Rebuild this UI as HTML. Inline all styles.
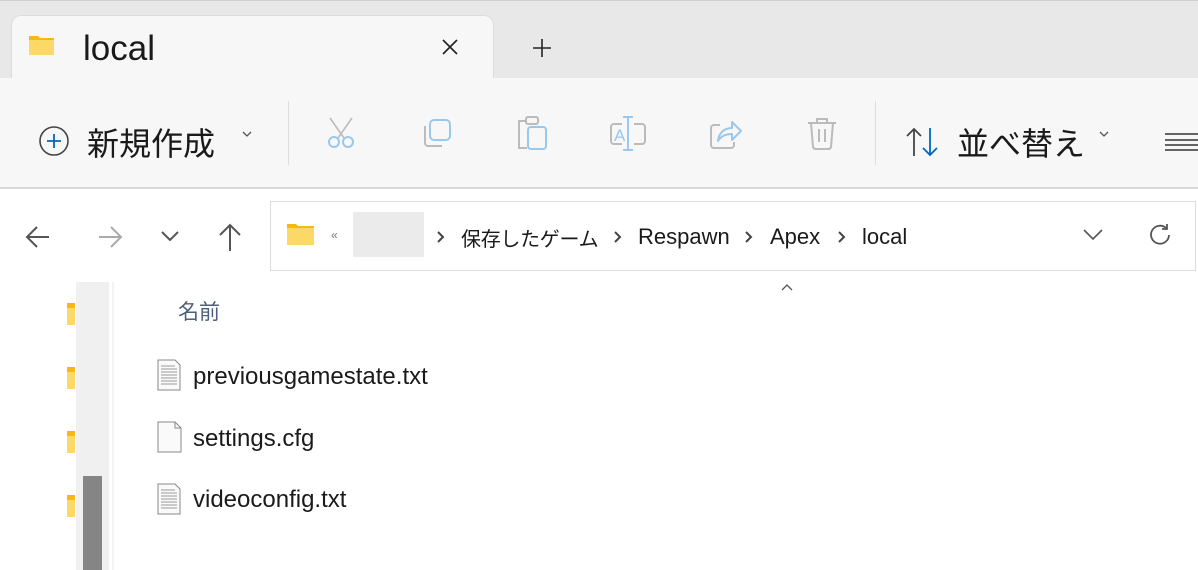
<!DOCTYPE html>
<html><head><meta charset="utf-8"><style>
*{margin:0;padding:0;box-sizing:border-box}
body{width:1198px;height:570px;overflow:hidden;background:#fff;position:relative;font-family:"Liberation Sans","Noto Sans CJK JP",sans-serif;color:#1a1a1a}
.a{position:absolute}
.jp{font-family:"Noto Sans CJK JP","Liberation Sans",sans-serif}
.bc{position:absolute;top:224px;font-size:22px;white-space:nowrap}
</style></head><body>
<div class="a" style="left:0;top:0;width:1198px;height:78px;background:#e8e8e8;border-top:1px solid #cfcfcf"></div>
<div class="a" style="left:11px;top:15px;width:483px;height:64px;background:#f7f7f7;border:1px solid #dcdcdc;border-bottom:none;border-radius:10px 10px 0 0"></div>
<div class="a" style="left:0;top:78px;width:1198px;height:111px;background:#f7f7f7;border-bottom:2px solid #d9d9d9"></div>
<svg class="a" style="left:28px;top:34px" width="28" height="24"><path d="M1 2h9l2 2h14v17H1z" fill="#f5b915"/><path d="M1 6h25v15H1z" fill="#fcd867"/></svg>
<div class="a" style="left:83px;top:29px;font-size:35px">local</div>
<svg class="a" style="left:440px;top:37px" width="20" height="20"><path d="M3 3l14 14M17 3L3 17" stroke="#222" stroke-width="1.6"/></svg>
<svg class="a" style="left:531px;top:37px" width="22" height="22"><path d="M11 2v18M2 11h18" stroke="#222" stroke-width="1.6"/></svg>
<svg class="a" style="left:37px;top:124px" width="34" height="34"><circle cx="17" cy="17" r="14" fill="none" stroke="#444" stroke-width="1.6"/><path d="M17 10v14M10 17h14" stroke="#0067c0" stroke-width="1.8"/></svg>
<div class="a jp" style="left:87px;top:119px;font-size:32px">新規作成</div>
<svg class="a" style="left:241px;top:130px" width="12" height="8"><path d="M2 2l4 4 4-4" fill="none" stroke="#555" stroke-width="1.3"/></svg>
<div class="a" style="left:288px;top:101px;width:1px;height:64px;background:#ddd"></div>
<svg class="a" style="left:325px;top:116px" width="32" height="34"><path d="M5 2l14 20M27 2L13 22" stroke="#bbb" stroke-width="1.6"/><circle cx="9" cy="26" r="5" fill="none" stroke="#99c8ee" stroke-width="2"/><circle cx="23" cy="26" r="5" fill="none" stroke="#99c8ee" stroke-width="2"/></svg>
<svg class="a" style="left:420px;top:117px" width="34" height="34"><rect x="10" y="3" width="20" height="20" rx="4" fill="none" stroke="#99c8ee" stroke-width="2"/><path d="M5 9v17a3 3 0 0 0 3 3h14" fill="none" stroke="#bbb" stroke-width="2"/></svg>
<svg class="a" style="left:515px;top:116px" width="34" height="36"><path d="M10 5H4v27h8" fill="none" stroke="#bbb" stroke-width="2"/><rect x="11" y="1" width="12" height="7" rx="2" fill="none" stroke="#bbb" stroke-width="2"/><rect x="13" y="11" width="18" height="22" rx="3" fill="none" stroke="#99c8ee" stroke-width="2"/></svg>
<svg class="a" style="left:610px;top:116px" width="36" height="36"><path d="M12 8H4a3 3 0 0 0-3 3v14a3 3 0 0 0 3 3h8M24 8h8a3 3 0 0 1 3 3v14a3 3 0 0 1-3 3h-8" fill="none" stroke="#bbb" stroke-width="2"/><path d="M13 1h10M13 34h10M18 1v33" stroke="#99c8ee" stroke-width="2"/><text x="4" y="25" font-size="17" fill="#99c8ee" font-family="Liberation Sans">A</text></svg>
<svg class="a" style="left:708px;top:117px" width="36" height="34"><path d="M12 8H6a3 3 0 0 0-3 3v17a3 3 0 0 0 3 3h17a3 3 0 0 0 3-3v-3" fill="none" stroke="#bbb" stroke-width="2"/><path d="M10 24c1-9 7-13 14-13V5l9 9-9 9v-6c-6 0-11 2-14 7z" fill="none" stroke="#99c8ee" stroke-width="2" stroke-linejoin="round"/></svg>
<svg class="a" style="left:805px;top:116px" width="34" height="36"><path d="M3 7h28M12 7V3h10v4M6 7l2 24a3 3 0 0 0 3 2h12a3 3 0 0 0 3-2l2-24M14 13v13M20 13v13" fill="none" stroke="#bbb" stroke-width="2"/></svg>
<div class="a" style="left:875px;top:101px;width:1px;height:64px;background:#ddd"></div>
<svg class="a" style="left:905px;top:126px" width="36" height="32"><path d="M9 30V3M2 10l7-7 7 7" fill="none" stroke="#444" stroke-width="1.8"/><path d="M25 2v27M18 22l7 7 7-7" fill="none" stroke="#0067c0" stroke-width="1.8"/></svg>
<div class="a jp" style="left:957px;top:119px;font-size:32px">並べ替え</div>
<svg class="a" style="left:1098px;top:130px" width="12" height="8"><path d="M2 2l4 4 4-4" fill="none" stroke="#555" stroke-width="1.3"/></svg>
<svg class="a" style="left:1165px;top:132px" width="33" height="20"><path d="M0 2h33M0 8h33M0 13h33M0 18h33" stroke="#333" stroke-width="1.6"/></svg>
<svg class="a" style="left:24px;top:224px" width="28" height="26"><path d="M3 13h22M13 3L3 13l10 10" fill="none" stroke="#555" stroke-width="2"/></svg>
<svg class="a" style="left:96px;top:224px" width="28" height="26"><path d="M3 13h22M15 3l10 10-10 10" fill="none" stroke="#aaa" stroke-width="2"/></svg>
<svg class="a" style="left:160px;top:229px" width="20" height="14"><path d="M2 3l8 8 8-8" fill="none" stroke="#555" stroke-width="2"/></svg>
<svg class="a" style="left:217px;top:222px" width="26" height="30"><path d="M13 29V3M3 13L13 3l10 10" fill="none" stroke="#555" stroke-width="2"/></svg>
<div class="a" style="left:270px;top:201px;width:926px;height:70px;border:1px solid #dcdcdc;background:#fff"></div>
<svg class="a" style="left:286px;top:223px" width="30" height="24"><path d="M1 1h9l2 2h16v19H1z" fill="#f5b915"/><path d="M1 5h27v17H1z" fill="#fcd867"/></svg>
<div class="a" style="left:331px;top:228px;font-size:12px;color:#777">«</div>
<div class="a" style="left:353px;top:212px;width:71px;height:45px;background:#ebebeb"></div>
<svg class="a" style="left:436px;top:230px" width="10" height="14"><path d="M2 2l5 5-5 5" fill="none" stroke="#444" stroke-width="2"/></svg>
<div class="bc jp" style="left:461px;top:223px;font-size:20px;letter-spacing:-0.3px">保存したゲーム</div>
<svg class="a" style="left:613px;top:230px" width="10" height="14"><path d="M2 2l5 5-5 5" fill="none" stroke="#444" stroke-width="2"/></svg>
<div class="bc" style="left:638px">Respawn</div>
<svg class="a" style="left:744px;top:230px" width="10" height="14"><path d="M2 2l5 5-5 5" fill="none" stroke="#444" stroke-width="2"/></svg>
<div class="bc" style="left:770px">Apex</div>
<svg class="a" style="left:837px;top:230px" width="10" height="14"><path d="M2 2l5 5-5 5" fill="none" stroke="#444" stroke-width="2"/></svg>
<div class="bc" style="left:862px">local</div>
<svg class="a" style="left:1082px;top:228px" width="22" height="14"><path d="M2 2l9 9 9-9" fill="none" stroke="#555" stroke-width="1.6"/></svg>
<svg class="a" style="left:1148px;top:222px" width="26" height="26"><path d="M21 13a9 9 0 1 1-3-7M19 2v5h-5" fill="none" stroke="#555" stroke-width="1.8"/></svg>
<svg class="a" style="left:780px;top:282px" width="14" height="10"><path d="M2 8l5-5 5 5" fill="none" stroke="#555" stroke-width="1.3"/></svg>
<div class="a" style="left:76px;top:282px;width:33px;height:288px;background:#f0f0f0"></div>
<div class="a" style="left:83px;top:476px;width:19px;height:94px;background:#858585"></div>
<div class="a" style="left:112px;top:282px;width:2px;height:288px;background:#f3f3f3"></div>
<div class="a" style="left:67px;top:303px;width:8px;height:22px;background:#fcd867;border-top:5px solid #f5b915"></div>
<div class="a" style="left:67px;top:367px;width:8px;height:22px;background:#fcd867;border-top:5px solid #f5b915"></div>
<div class="a" style="left:67px;top:431px;width:8px;height:22px;background:#fcd867;border-top:5px solid #f5b915"></div>
<div class="a" style="left:67px;top:495px;width:8px;height:22px;background:#fcd867;border-top:5px solid #f5b915"></div>
<div class="a jp" style="left:178px;top:296px;font-size:21px;color:#4c607a">名前</div>
<svg class="a" style="left:157px;top:359px" width="24" height="32"><path d="M1 1h17l5 5v25H1z" fill="#fafafa" stroke="#888"/><path d="M4 7h14M4 10h16M4 13h16M4 16h16M4 19h16M4 22h16M4 25h16" stroke="#999"/></svg>
<div class="a" style="left:193px;top:363px;font-size:24px">previousgamestate.txt</div>
<svg class="a" style="left:157px;top:421px" width="26" height="32"><path d="M1 1h17l6 6v24H1z" fill="#fafafa" stroke="#888"/><path d="M18 1v6h6" fill="none" stroke="#888"/></svg>
<div class="a" style="left:193px;top:425px;font-size:24px">settings.cfg</div>
<svg class="a" style="left:157px;top:483px" width="24" height="32"><path d="M1 1h17l5 5v25H1z" fill="#fafafa" stroke="#888"/><path d="M4 7h14M4 10h16M4 13h16M4 16h16M4 19h16M4 22h16M4 25h16" stroke="#999"/></svg>
<div class="a" style="left:193px;top:486px;font-size:24px">videoconfig.txt</div>
</body></html>
